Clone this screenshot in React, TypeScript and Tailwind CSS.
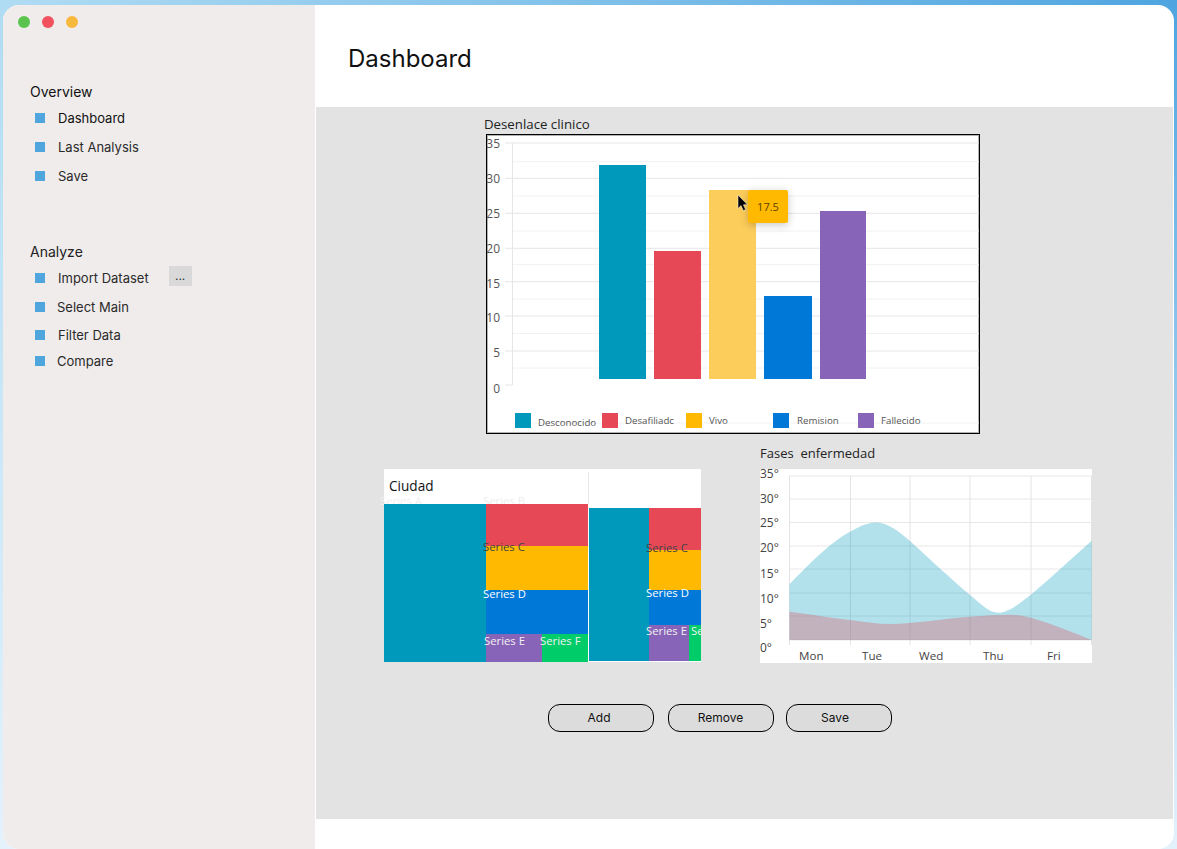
import React from "react";

const overview = [
  { label: "Dashboard", mt: "mt-[7px]", strong: true },
  { label: "Last Analysis", mt: "mt-[9px]", strong: false },
  { label: "Save", mt: "mt-[9px]", strong: false },
];

function NavItem({ label, mt, strong, textClass = "ml-[13px]", children }: { label: string; mt: string; strong?: boolean; textClass?: string; children?: React.ReactNode }) {
  return (
    <div className={`flex h-5 items-center pl-8 ${mt}`}>
      <span className="h-[10px] w-[10px] bg-[#4ea6dc]" />
      <span className={`${textClass} pt-0.5 text-[13px] ${strong ? "text-[#111]" : "text-[#2a2a2a]"}`}>{label}</span>
      {children}
    </div>
  );
}

function Sidebar() {
  return (
    <aside className="h-full w-[312px] shrink-0 bg-[#f0ecec] font-['Inter',sans-serif]">
      <div className="ml-[15px] mt-[11px] flex gap-3">
        <span className="h-3 w-3 rounded-full bg-[#5ac44f]" />
        <span className="h-3 w-3 rounded-full bg-[#f2525e]" />
        <span className="h-3 w-3 rounded-full bg-[#f6b93e]" />
      </div>
      <h2 className="ml-[27px] mt-[54px] h-5 text-[14px] leading-5 font-normal text-[#111]">Overview</h2>
      <div className="-mt-px">
        {overview.map((o) => (
          <NavItem key={o.label} label={o.label} mt={o.mt} strong={o.strong} />
        ))}
      </div>
      <h2 className="ml-[27px] mt-[56px] h-5 text-[14px] leading-5 font-normal text-[#222]">Analyze</h2>
      <NavItem label="Import Dataset" mt="mt-[6px]">
        <span className="ml-5 flex h-5 w-[23px] -translate-y-[2px] items-center justify-center bg-[#d9d9d9] text-[12px] text-[#333]">...</span>
      </NavItem>
      <NavItem label="Select Main" mt="mt-[9px]" textClass="ml-3" />
      <NavItem label="Filter Data" mt="mt-2" />
      <NavItem label="Compare" mt="mt-[6px]" textClass="ml-3" />
    </aside>
  );
}

function BarChart() {
  const grid = [143, 161.7, 178.3, 196, 213.3, 231, 248.3, 264.7, 281.7, 299, 316, 333.5, 351, 368, 423];
  const major = [143, 178.3, 213.3, 248.3, 281.7, 316, 351];
  const ticks = [["35", 143], ["30", 178], ["25", 213], ["20", 248], ["15", 283], ["10", 317], ["5", 352], ["0", 388]] as const;
  const bars = [
    [599, 47, 165, "#0099bc"],
    [654, 47, 251, "#e74856"],
    [709, 47, 190, "#fdcd5b"],
    [764, 48, 296, "#0078d7"],
    [820, 46, 211, "#8764b8"],
  ] as const;
  const legend = [
    [515, "#0099bc", "Desconocido", 538, 426],
    [602, "#e74856", "Desafiliadc", 625, 424],
    [686, "#ffb900", "Vivo", 709, 424],
    [773, "#0078d7", "Remision", 797, 424],
    [858, "#8764b8", "Fallecido", 881, 424],
  ] as const;
  return (
    <div className="relative ml-[170px] h-[300px] w-[494px] border border-black bg-white shadow-[inset_0_0_0_1px_rgba(0,0,0,0.3)]">
      <svg width="492" height="298" viewBox="487 135 492 298" className="block font-['Open_Sans',sans-serif]">
        {grid.map((y) => (
          <line key={y} x1={major.includes(y) ? 505 : 512} x2="979" y1={y} y2={y} stroke={major.includes(y) ? "#e6e6e6" : "#f2f2f2"} strokeWidth="1" />
        ))}
        <line x1="512.5" x2="512.5" y1="143" y2="385" stroke="#e6e6e6" />
        <line x1="505" x2="512.5" y1="385" y2="385" stroke="#e6e6e6" />
        {ticks.map(([t, y]) => (
          <text key={t} x="500" y={y + 5} textAnchor="end" className="fill-[#555] text-[12px]">{t}</text>
        ))}
        {bars.map(([x, w, top, c]) => (
          <rect key={x} x={x} y={top} width={w} height={379 - top} fill={c} />
        ))}
        {legend.map(([x, c, t, tx, ty]) => (
          <g key={t}>
            <rect x={x} y="413" width="16" height="15" fill={c} />
            <text x={tx} y={ty} className="fill-[#555] text-[9.7px]">{t}</text>
          </g>
        ))}
        <path d="M738 195 L738 208.5 L741 205.6 L743.3 210.6 L745.6 209.6 L743.4 204.8 L747.3 204.6 Z" fill="#000" stroke="#fff" strokeWidth="0.5" />
      </svg>
      <div className="absolute left-[261px] top-[55px] flex h-[33px] w-[40px] items-center justify-center rounded-[2px] bg-[#ffb900] pt-0.5 font-['Open_Sans',sans-serif] text-[11px] text-[#5c4300] shadow-[0_2px_8px_rgba(0,0,0,0.22)]">
        17.5
      </div>
    </div>
  );
}

function Treemap() {
  const rects = [
    [384, 504, 102, 158, "#0099bc"],
    [486, 504, 102, 42, "#e74856"],
    [486, 546, 102, 44, "#ffb900"],
    [486, 590, 102, 44, "#0078d7"],
    [486, 634, 56, 28, "#8764b8"],
    [542, 634, 46, 28, "#00cc6a"],
    [589, 508, 60, 153, "#0099bc"],
    [649, 508, 52, 42, "#e74856"],
    [649, 550, 52, 40, "#ffb900"],
    [649, 590, 52, 35, "#0078d7"],
    [649, 625, 40, 36, "#8764b8"],
    [689, 625, 12, 36, "#00cc6a"],
  ] as const;
  const labels = [
    ["Series C", 483, 551, "fill-[#444]"],
    ["Series D", 483, 598, "fill-white"],
    ["Series E", 484, 645, "fill-[#f2f2f2]"],
    ["Series F", 540, 645, "fill-[#f2f2f2]"],
    ["Series C", 646, 552, "fill-[#444]"],
    ["Series D", 646, 597, "fill-white"],
    ["Series E", 646, 635, "fill-[#f2f2f2]"],
  ] as const;
  return (
    <svg width="322" height="193" viewBox="379 469 322 193" className="mb-px ml-[63px] block shrink-0 font-['Open_Sans',sans-serif]">
      <rect x="384" y="469" width="317" height="193" fill="#fff" />
      <line x1="588.5" x2="588.5" y1="472" y2="504" stroke="#e8e8e8" />
      <text x="380" y="505" className="fill-[#f0f0f0] text-[11.3px]">Series A</text>
      <text x="483" y="505" className="fill-[#eeeeee] text-[11.3px]">Series B</text>
      {rects.map(([x, y, w, h, c], i) => (
        <rect key={i} x={x} y={y} width={w} height={h} fill={c} />
      ))}
      {labels.map(([t, x, y, cls], i) => (
        <text key={i} x={x} y={y} className={`${cls} text-[11.3px]`}>{t}</text>
      ))}
      <svg x="689" y="625" width="12" height="36" overflow="hidden" viewBox="689 625 12 36">
        <text x="691" y="635" className="fill-[#f2f2f2] text-[11.3px]">Series F</text>
      </svg>
      <text x="389" y="491" className="fill-[#111] text-[13.6px]">Ciudad</text>
    </svg>
  );
}

function AreaChart() {
  const ys = [476, 499, 522.5, 546, 569, 593, 616, 640];
  const xs = [789.5, 850.5, 910, 970, 1031, 1091.5];
  const yl = [["35°", 478], ["30°", 503], ["25°", 527], ["20°", 552], ["15°", 578], ["10°", 603], ["5°", 628], ["0°", 652]] as const;
  const xl = [["Mon", 799], ["Tue", 862], ["Wed", 919], ["Thu", 983], ["Fri", 1047]] as const;
  return (
    <svg width="332" height="194" viewBox="760 469 332 194" className="block overflow-visible font-['Open_Sans',sans-serif]">
      <rect x="760" y="469" width="332" height="194" fill="#fff" />
      {ys.map((y) => (
        <line key={y} x1="789" x2="1092" y1={y} y2={y} stroke="#e8e8e8" />
      ))}
      {xs.map((x) => (
        <line key={x} x1={x} x2={x} y1="476" y2="645" stroke="#e4e4e4" />
      ))}
      <path d="M789.5 584.3 C810 563 832 541 850 531.7 C862 525 869 522.5 876.7 522.5 C888 523 900 532 910 541 C932 561 952 580 970 595 C981 604 989 612.7 998 612.7 C1008 612.7 1019 604 1031.7 594 C1052 577 1072 558 1091.7 540.7 L1091.7 640 L789.5 640 Z" fill="#0099bc" fillOpacity="0.3" />
      <path d="M789.5 611.7 C810 614 830 618 850 620 C865 622 878 624 890 624 C915 624 945 618 970 616.7 C985 615.5 998 614.7 1010 614.7 C1018 614.8 1025 616 1031.7 618 C1052 624 1072 632 1091.7 640 L789.5 640 Z" fill="#e74856" fillOpacity="0.3" />
      {yl.map(([t, y]) => (
        <text key={t} x="760" y={y} className="fill-[#444] text-[12px]">{t}</text>
      ))}
      {xl.map(([t, x]) => (
        <text key={t} x={x} y="660" className="fill-[#444] text-[11.6px]">{t}</text>
      ))}
    </svg>
  );
}

function Btn({ label, cls }: { label: string; cls: string }) {
  return (
    <button className={`h-7 w-[106px] rounded-[12px] border border-black bg-[#dcdcdc] font-['Inter',sans-serif] text-[12px] text-[#111] ${cls}`}>
      {label}
    </button>
  );
}

export default function App() {
  return (
    <div className="h-[849px] w-[1177px] overflow-hidden bg-[linear-gradient(to_bottom,transparent_0%,#e4f2fc_100%),linear-gradient(to_right,#b0dcf3,#4fa5e0)] pl-[3px] pr-[3px] pt-[5px]">
      <div className="flex h-[844px] w-[1171px] overflow-hidden rounded-[16px] bg-white">
        <Sidebar />
        <main className="ml-px w-[857px]">
          <header className="flex h-[102px] items-center pl-8">
            <h1 className="translate-y-[3px] font-['Inter',sans-serif] text-[24px] font-normal text-[#111]">Dashboard</h1>
          </header>
          <section className="h-[712px] bg-[#e3e3e3] pt-[9px]">
            <p className="ml-[168px] h-4 font-['Open_Sans',sans-serif] text-[13.25px] leading-4 text-[#222]">Desenlace clinico</p>
            <div className="mt-[2px]">
              <BarChart />
            </div>
            <div className="mt-[11px] flex items-end">
              <Treemap />
              <div className="ml-[59px]">
                <p className="mb-2 h-4 font-['Open_Sans',sans-serif] text-[13px] leading-4 text-[#222]">Fases&nbsp; enfermedad</p>
                <AreaChart />
              </div>
            </div>
            <div className="ml-[232px] mt-[41px] flex">
              <Btn label="Add" cls="pr-1" />
              <Btn label="Remove" cls="ml-[14px] pr-px" />
              <Btn label="Save" cls="ml-3 pr-2" />
            </div>
          </section>
        </main>
      </div>
    </div>
  );
}
